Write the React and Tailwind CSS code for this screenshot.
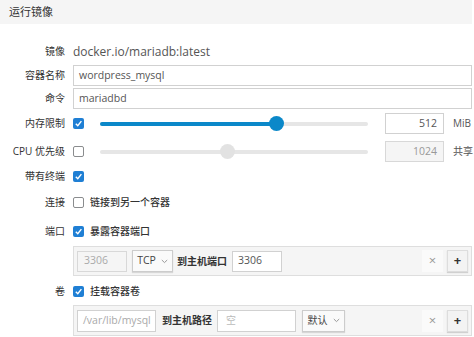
import React from 'react';

const font = { fontFamily: '"Open Sans", "Noto Sans CJK SC", sans-serif' };

const Check = ({ on }) =>
  on ? (
    <span className="w-[11px] h-[11px] rounded-[2px] bg-[#1f7fd4] flex items-center justify-center shrink-0">
      <svg width="9" height="9" viewBox="0 0 10 10">
        <path d="M2 5.2 L4.2 7.4 L8.2 2.4" fill="none" stroke="white" strokeWidth="1.6" />
      </svg>
    </span>
  ) : (
    <span className="w-[11px] h-[11px] rounded-[2px] border border-[#8a8c8e] bg-white shrink-0" />
  );

const Chevron = () => (
  <svg width="7" height="5" viewBox="0 0 7 5" className="ml-[5px]">
    <path d="M0.8 1 L3.5 3.6 L6.2 1" fill="none" stroke="#999" strokeWidth="1" />
  </svg>
);

const Row = ({ label, className = '', children }) => (
  <div className={`flex items-center h-[21px] ${className}`}>
    <div className="w-[65px] shrink-0 text-right text-[#333] whitespace-nowrap">{label}</div>
    <div className="ml-2 flex-1 flex items-center h-full">{children}</div>
  </div>
);

const Slider = ({ pct, active }) => (
  <div className="relative w-[268px] h-[15px] ml-[16px] shrink-0">
    <div className="absolute left-0 right-0 top-[6px] h-[4px] rounded-full bg-[#e6e6e6]" />
    {active && (
      <div className="absolute left-0 top-[6px] h-[4px] rounded-full bg-[#0b88c9]" style={{ width: `${pct}%` }} />
    )}
    <div
      className={`absolute top-0 w-[15px] h-[15px] rounded-full -ml-[7px] ${active ? 'bg-[#0b88c9]' : 'bg-[#e2e2e2]'}`}
      style={{ left: `${pct}%` }}
    />
  </div>
);

const Buttons = () => (
  <div className="ml-auto flex items-center gap-[4px]">
    <div className="w-[21px] h-[22px] bg-[#fafafa] flex items-center justify-center text-[#999] text-[13px]">×</div>
    <div className="w-[21px] h-[22px] bg-[#f3f3f3] border border-[#ddd] shadow-[0_1px_1px_rgba(0,0,0,0.15)] flex items-center justify-center text-[#333] font-bold text-[13px]">+</div>
  </div>
);

export default function App() {
  return (
    <div className="w-[474px] h-[337px] bg-white text-[10px] text-[#444] overflow-hidden" style={font}>
      <div className="w-[472px] h-[24px] bg-[#f5f5f5] flex items-center pl-[9px] text-[11px] text-[#333]">
        运行镜像
      </div>
      <div className="w-[472px] flex flex-col">
        <Row label="镜像" className="mt-[17px]">
          <span className="text-[#555] text-[12px]">docker.io/mariadb:latest</span>
        </Row>
        <Row label="容器名称" className="mt-[3px]">
          <div className="w-full h-full border border-[#d1d1d1] flex items-center px-[5px] text-[#555] text-[10.5px]">wordpress_mysql</div>
        </Row>
        <Row label="命令" className="mt-[2px]">
          <div className="w-full h-full border border-[#d1d1d1] flex items-center px-[5px] text-[#555] text-[10.5px]">mariadbd</div>
        </Row>
        <Row label="内存限制" className="mt-[4px]">
          <Check on />
          <Slider pct={65.7} active />
          <div className="ml-[17px] w-[59px] h-[21px] shrink-0 border border-[#d1d1d1] flex items-center justify-end pr-[6px] text-[#555] text-[10.5px]">512</div>
          <span className="ml-[9px] text-[#555] whitespace-nowrap">MiB</span>
        </Row>
        <Row label="CPU 优先级" className="mt-[7px]">
          <Check />
          <Slider pct={47.4} />
          <div className="ml-[17px] w-[59px] h-[21px] shrink-0 border border-[#d8d8d8] bg-[#f5f5f5] flex items-center justify-end pr-[6px] text-[#999] text-[10.5px]">1024</div>
          <span className="ml-[9px] text-[#555] whitespace-nowrap">共享</span>
        </Row>
        <Row label="带有终端" className="mt-[4px]">
          <Check on />
        </Row>
        <Row label="连接" className="mt-[5px]">
          <Check />
          <span className="ml-[6px] text-[#333] font-medium">链接到另一个容器</span>
        </Row>
        <Row label="端口" className="mt-[8px]">
          <Check on />
          <span className="ml-[6px] text-[#333] font-medium">暴露容器端口</span>
        </Row>
        <div className="ml-[73px] mt-[4px] h-[30px] bg-[#f5f5f5] border border-[#dedede] flex items-center pl-[3px] pr-[3px]">
          <div className="w-[50px] h-[21px] border border-[#d8d8d8] bg-[#f5f5f5] flex items-center px-[6px] text-[#aaa] text-[10.5px]">3306</div>
          <div className="ml-[5px] w-[41px] h-[22px] border border-[#ccc] bg-[#fafafa] shadow-[0_1px_1px_rgba(0,0,0,0.12)] flex items-center justify-center text-[#444] text-[10.5px]">
            TCP<Chevron />
          </div>
          <span className="ml-[4px] text-[#333] font-semibold">到主机端口</span>
          <div className="ml-[5px] w-[50px] h-[21px] border border-[#d1d1d1] bg-white flex items-center px-[5px] text-[#555] text-[10.5px]">3306</div>
          <Buttons />
        </div>
        <Row label="卷" className="mt-[5px]">
          <Check on />
          <span className="ml-[6px] text-[#333] font-medium">挂载容器卷</span>
        </Row>
        <div className="ml-[73px] mt-[3px] h-[31px] bg-[#f5f5f5] border border-[#dedede] flex items-center pl-[3px] pr-[3px]">
          <div className="w-[79px] h-[22px] border border-[#d1d1d1] bg-white flex items-center px-[5px] text-[#aaa] text-[10.5px] whitespace-nowrap overflow-hidden">/var/lib/mysql</div>
          <span className="ml-[6px] text-[#333] font-semibold">到主机路径</span>
          <div className="ml-[5px] w-[79px] h-[22px] border border-[#d1d1d1] bg-white flex items-center px-[8px] text-[#bbb]">空</div>
          <div className="ml-[6px] w-[43px] h-[22px] border border-[#ccc] bg-[#fafafa] shadow-[0_1px_1px_rgba(0,0,0,0.12)] flex items-center justify-center text-[#444]">
            默认<Chevron />
          </div>
          <Buttons />
        </div>
      </div>
    </div>
  );
}
